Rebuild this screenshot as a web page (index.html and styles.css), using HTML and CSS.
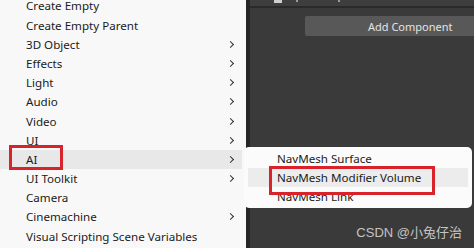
FILE: index.html
```html
<!DOCTYPE html>
<html lang="en">
<head>
  <meta charset="UTF-8" />
  <title>Create Menu</title>
  <link rel="stylesheet" href="styles.css">
</head>
<body>
  <div class="screen">
    <div class="menu">
      <div class="row">Create Empty</div>
      <div class="row">Create Empty Parent</div>
      <div class="row sub">3D Object</div>
      <div class="row sub">Effects</div>
      <div class="row sub">Light</div>
      <div class="row sub">Audio</div>
      <div class="row sub">Video</div>
      <div class="row sub">UI</div>
      <div class="row sub active">AI</div>
      <div class="row sub">UI Toolkit</div>
      <div class="row">Camera</div>
      <div class="row sub">Cinemachine</div>
      <div class="row">Visual Scripting Scene Variables</div>
    </div>

    <div class="inspector">
      <div class="inspector-head">
        <span class="head-icon"></span>
        <span class="head-bits"></span>
      </div>
      <div class="inspector-body">
        <button class="add-btn">Add Component</button>
      </div>
    </div>

    <div class="submenu">
      <div class="row">NavMesh Surface</div>
      <div class="row active">NavMesh Modifier Volume</div>
      <div class="row">NavMesh Link</div>
    </div>

    <div class="mark mark-ai"></div>
    <div class="mark mark-volume"></div>

    <div class="watermark">CSDN @小兔仔治</div>
  </div>
</body>
</html>
```

FILE: styles.css
```css
body {
  margin: 0;
  background: #3a3a3a;
  font-family: "Noto Sans", "Noto Sans CJK SC", sans-serif;
}

.screen {
  position: relative;
  width: 474px;
  height: 248px;
  overflow: hidden;
  display: flex;
}

.menu {
  width: 246px;
  flex: none;
  background: #f8f8f8;
  margin-top: -3.6px;
}

.row {
  height: 19.2px;
  line-height: 19.2px;
  padding-left: 26px;
  font-size: 11.6px;
  color: #1b1b1b;
  position: relative;
  white-space: nowrap;
}

.menu .row.active {
  background: #e8e8e8;
  margin-right: 4px;
}

.menu .row.sub::after {
  content: "";
  position: absolute;
  left: 228px;
  top: 7px;
  width: 4px;
  height: 4px;
  border-right: 1.3px solid #333;
  border-top: 1.3px solid #333;
  transform: rotate(45deg);
}

.inspector {
  flex: 1;
  display: flex;
  flex-direction: column;
  border-left: 4px solid #262626;
  background: #3a3a3a;
}

.inspector-head {
  height: 6px;
  background: #3e3e3e;
  border-bottom: 2px solid #2a2a2a;
  display: flex;
  align-items: flex-start;
  gap: 14px;
  padding-left: 24px;
}

.head-icon {
  width: 8px;
  height: 3px;
  background: #cfcfcf;
}

.head-bits {
  width: 40px;
  height: 2px;
  border-left: 2px solid #9a9a9a;
  border-right: 2px solid #9a9a9a;
}

.inspector-body {
  padding: 8px 0 0 55px;
}

.add-btn {
  display: block;
  width: 100%;
  height: 20px;
  border: none;
  border-radius: 2px 0 0 2px;
  background: #585858;
  color: #e4e4e4;
  font-family: "Noto Sans", sans-serif;
  font-size: 11px;
  padding: 0 0 0 63px;
  text-align: left;
}

.submenu {
  position: absolute;
  left: 244px;
  top: 147px;
  width: 228px;
  height: 61px;
  box-sizing: border-box;
  padding-top: 2px;
  background: #fbfbfb;
  border-radius: 5px;
}

.submenu .row {
  padding-left: 33px;
}

.submenu .row.active {
  background: #ececec;
  margin: 0 4px;
  padding-left: 29px;
}

.mark {
  position: absolute;
  border: 3px solid #d8232a;
  box-sizing: border-box;
}

.mark-ai {
  left: 9px;
  top: 145px;
  width: 54px;
  height: 25px;
}

.mark-volume {
  left: 269px;
  top: 166px;
  width: 166px;
  height: 29px;
}

.watermark {
  position: absolute;
  right: 12px;
  bottom: 7px;
  font-size: 13px;
  color: #c4c4c4;
  font-family: "Liberation Sans", "Noto Sans CJK SC", sans-serif;
}
```
